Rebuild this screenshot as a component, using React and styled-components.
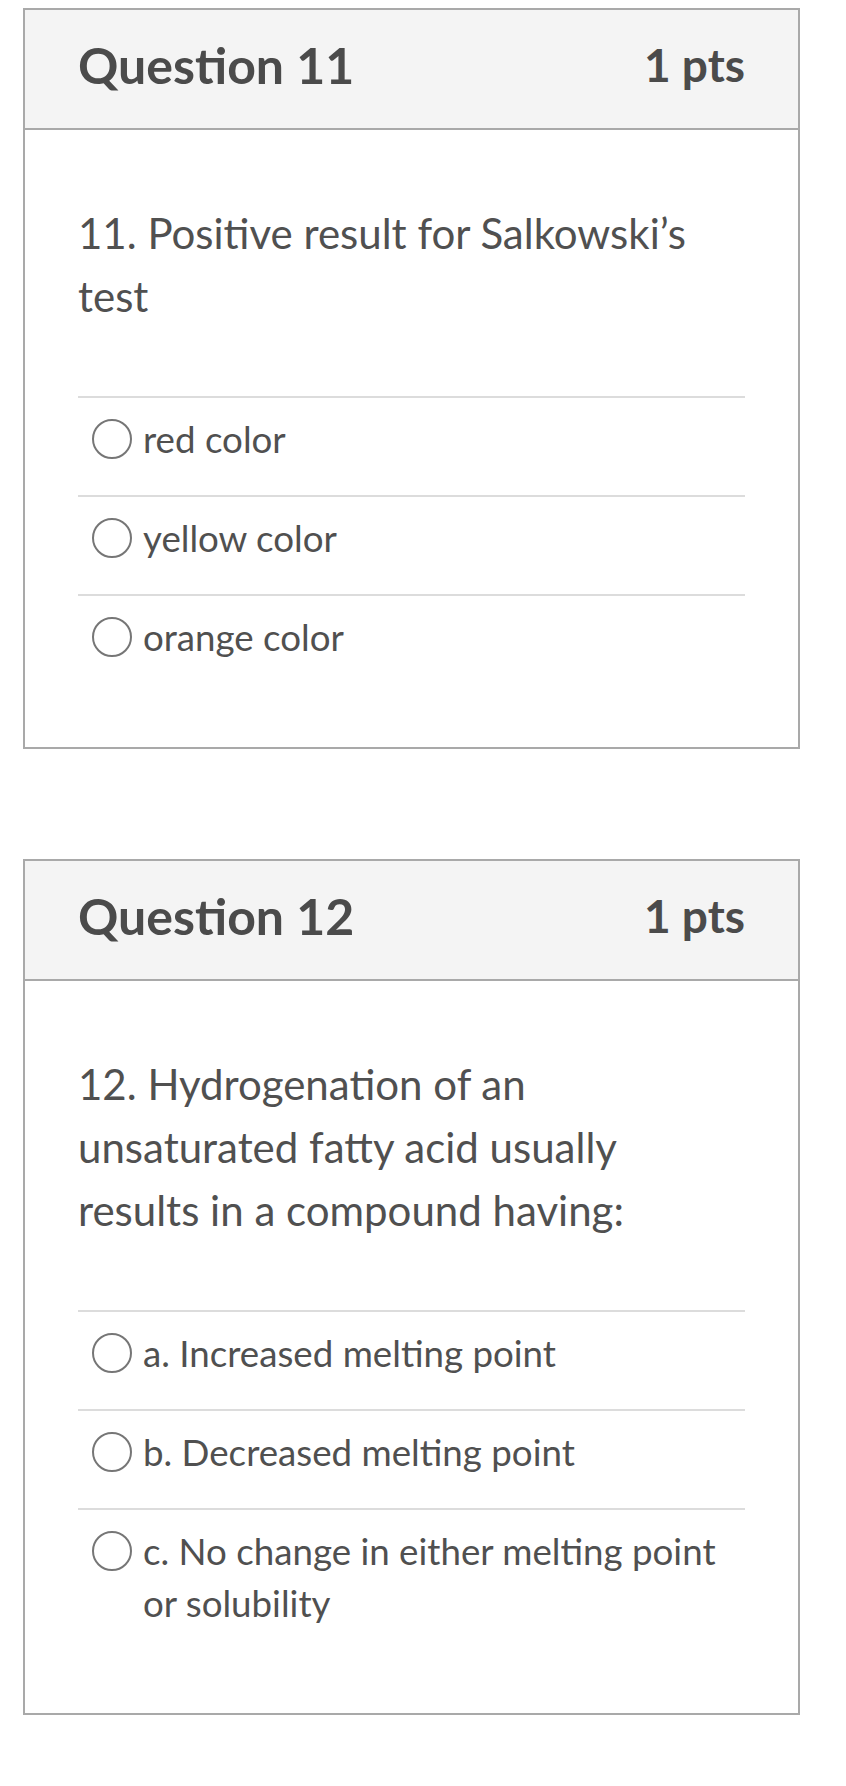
import React from 'react';
import styled, { createGlobalStyle } from 'styled-components';

const GlobalStyle = createGlobalStyle`
  body {
    margin: 0;
    background: #fff;
    font-family: Lato, "Liberation Sans", sans-serif;
    color: #505050;
  }
`;

const Page = styled.div`
  display: flex;
  flex-direction: column;
  gap: 110px;
  padding: 8px 46px 40px 23px;
`;

const Card = styled.section`
  border: 2px solid #a9a9a9;
  background: #fff;
`;

const Header = styled.header`
  display: flex;
  justify-content: space-between;
  align-items: center;
  height: 120px;
  box-sizing: border-box;
  padding: 0 53px 9px;
  background: #f4f4f4;
  border-bottom: 2px solid #a9a9a9;
`;

const Title = styled.h2`
  margin: 0;
  font-size: 50px;
  font-weight: 700;
  color: #4b4b4b;
`;

const Points = styled.span`
  font-size: 46px;
  font-weight: 700;
  color: #4b4b4b;
`;

const Body = styled.div`
  padding: 72px 53px 84px;
`;

const QuestionText = styled.p`
  margin: 0 0 68px;
  font-size: 42px;
  line-height: 63px;
`;

const Answers = styled.ul`
  list-style: none;
  margin: 0;
  padding: 0;
`;

const Answer = styled.li`
  display: flex;
  align-items: flex-start;
  gap: 11px;
  padding: 15px 0 30px 14px;
  border-top: 2px solid #dcdcdc;
  &:last-child {
    padding-bottom: 0;
  }
`;

const Radio = styled.span`
  flex: none;
  width: 36px;
  height: 36px;
  margin-top: 6px;
  border: 2px solid #767676;
  border-radius: 50%;
`;

const AnswerText = styled.span`
  font-size: 36.7px;
  line-height: 52px;
`;

const questions = [
  {
    n: 11,
    text: '11. Positive result for Salkowski\u2019s test',
    answers: ['red color', 'yellow color', 'orange color'],
  },
  {
    n: 12,
    text: '12. Hydrogenation of an unsaturated fatty acid usually results in a compound having:',
    answers: [
      'a. Increased melting point',
      'b. Decreased melting point',
      'c. No change in either melting point or solubility',
    ],
  },
];

const Question = ({ q }) => (
  <Card>
    <Header>
      <Title>Question {q.n}</Title>
      <Points>1 pts</Points>
    </Header>
    <Body>
      <QuestionText>{q.text}</QuestionText>
      <Answers>
        {q.answers.map((a) => (
          <Answer key={a}>
            <Radio />
            <AnswerText>{a}</AnswerText>
          </Answer>
        ))}
      </Answers>
    </Body>
  </Card>
);

const App = () => (
  <>
    <GlobalStyle />
    <Page>
      {questions.map((q) => (
        <Question key={q.n} q={q} />
      ))}
    </Page>
  </>
);

export default App;
